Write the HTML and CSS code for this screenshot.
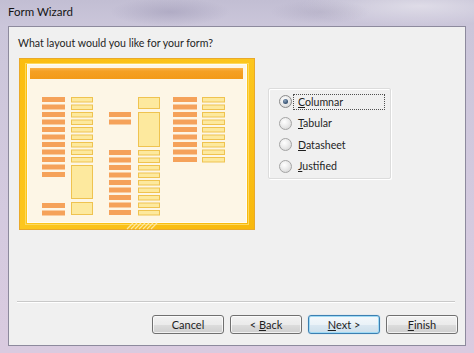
FILE: index.html
```html
<!DOCTYPE html>
<html lang="en">
<head>
  <meta charset="UTF-8" />
  <title>Form Wizard</title>
  <link rel="stylesheet" href="styles.css">
</head>
<body>

  <div class="window">
    <!-- Title bar -->
    <div class="titlebar">Form Wizard</div>

    <div class="client">
      <p class="prompt">What layout would you like for your form?</p>

      <div class="main">
        <!-- Layout preview -->
        <svg class="preview" width="236" height="172" viewBox="0 0 236 172">
          <defs>
            <linearGradient id="frame" x1="0" y1="0" x2="1" y2="1">
              <stop offset="0" stop-color="#fbbd10" />
              <stop offset="0.5" stop-color="#fcc61e" />
              <stop offset="1" stop-color="#f8b80c" />
            </linearGradient>
            <linearGradient id="head" x1="0" y1="0" x2="0" y2="1">
              <stop offset="0" stop-color="#f9b24a" />
              <stop offset="0.3" stop-color="#f5a023" />
              <stop offset="1" stop-color="#f39a18" />
            </linearGradient>
          </defs>
          <rect x="0.5" y="0.5" width="235" height="171" fill="url(#frame)" stroke="#e9a92a" />
          <rect x="6.5" y="5.5" width="223" height="161" fill="none" stroke="#fdd95e" />
          <rect x="8.5" y="6.5" width="219" height="158" fill="#fdf6e6" stroke="#fffdf5" />
          <rect x="11" y="10" width="213" height="11" fill="url(#head)" />

          <!-- hatch on bottom edge -->
          <g stroke="#fde6a0" stroke-width="1.2">
            <line x1="108" y1="171" x2="114" y2="165" />
            <line x1="112" y1="171" x2="118" y2="165" />
            <line x1="116" y1="171" x2="122" y2="165" />
            <line x1="120" y1="171" x2="126" y2="165" />
            <line x1="124" y1="171" x2="130" y2="165" />
            <line x1="128" y1="171" x2="134" y2="165" />
            <line x1="132" y1="171" x2="138" y2="165" />
          </g>

          <!-- labels -->
          <g fill="#f5a25a">
            <rect x="23" y="39" width="23" height="5" />
            <rect x="23" y="46.5" width="23" height="5" />
            <rect x="23" y="54" width="23" height="5" />
            <rect x="23" y="61.5" width="23" height="5" />
            <rect x="23" y="69" width="23" height="5" />
            <rect x="23" y="76.5" width="23" height="5" />
            <rect x="23" y="84" width="23" height="5" />
            <rect x="23" y="91.5" width="23" height="5" />
            <rect x="23" y="99" width="23" height="5" />
            <rect x="23" y="106.5" width="23" height="5" />
            <rect x="23" y="114" width="23" height="5" />
            <rect x="23" y="145" width="23" height="5" />
            <rect x="23" y="152.5" width="23" height="5" />

            <rect x="90" y="54" width="22" height="5" />
            <rect x="90" y="61.5" width="22" height="5" />
            <rect x="90" y="92" width="22" height="5" />
            <rect x="90" y="99.5" width="22" height="5" />
            <rect x="90" y="107" width="22" height="5" />
            <rect x="90" y="114.5" width="22" height="5" />
            <rect x="90" y="122" width="22" height="5" />
            <rect x="90" y="129.5" width="22" height="5" />
            <rect x="90" y="137" width="22" height="5" />
            <rect x="90" y="144.5" width="22" height="5" />
            <rect x="90" y="152" width="22" height="5" />

            <rect x="154" y="39" width="24" height="5" />
            <rect x="154" y="46.5" width="24" height="5" />
            <rect x="154" y="54" width="24" height="5" />
            <rect x="154" y="61.5" width="24" height="5" />
            <rect x="154" y="69" width="24" height="5" />
            <rect x="154" y="76.5" width="24" height="5" />
            <rect x="154" y="84" width="24" height="5" />
            <rect x="154" y="91.5" width="24" height="5" />
            <rect x="154" y="99" width="24" height="5" />
          </g>

          <!-- fields -->
          <g fill="#fde99e" stroke="#efc350" stroke-width="1">
            <rect x="52.5" y="39.5" width="21" height="4.5" />
            <rect x="52.5" y="47" width="21" height="4.5" />
            <rect x="52.5" y="54.5" width="21" height="4.5" />
            <rect x="52.5" y="62" width="21" height="4.5" />
            <rect x="52.5" y="69.5" width="21" height="4.5" />
            <rect x="52.5" y="77" width="21" height="4.5" />
            <rect x="52.5" y="84.5" width="21" height="4.5" />
            <rect x="52.5" y="92" width="21" height="4.5" />
            <rect x="52.5" y="99.5" width="21" height="4.5" />
            <rect x="52.5" y="107.5" width="21" height="33" />
            <rect x="52.5" y="144.5" width="21" height="12" />

            <rect x="119.5" y="39.5" width="21" height="11" />
            <rect x="119.5" y="54.5" width="21" height="34" />
            <rect x="119.5" y="92.5" width="21" height="4.5" />
            <rect x="119.5" y="100" width="21" height="4.5" />
            <rect x="119.5" y="107.5" width="21" height="4.5" />
            <rect x="119.5" y="115" width="21" height="4.5" />
            <rect x="119.5" y="122.5" width="21" height="4.5" />
            <rect x="119.5" y="130" width="21" height="4.5" />
            <rect x="119.5" y="137.5" width="21" height="4.5" />
            <rect x="119.5" y="145" width="21" height="4.5" />
            <rect x="119.5" y="152.5" width="21" height="4.5" />

            <rect x="183.5" y="39.5" width="22" height="4.5" />
            <rect x="183.5" y="47" width="22" height="4.5" />
            <rect x="183.5" y="54.5" width="22" height="4.5" />
            <rect x="183.5" y="62" width="22" height="4.5" />
            <rect x="183.5" y="69.5" width="22" height="4.5" />
            <rect x="183.5" y="77" width="22" height="4.5" />
            <rect x="183.5" y="84.5" width="22" height="4.5" />
            <rect x="183.5" y="92" width="22" height="4.5" />
            <rect x="183.5" y="99.5" width="22" height="4.5" />
          </g>
        </svg>

        <!-- Layout options -->
        <div class="layouts">
          <div class="opt">
            <span class="dot checked"></span>
            <span class="opt-text focus"><u>C</u>olumnar</span>
          </div>
          <div class="opt">
            <span class="dot"></span>
            <span class="opt-text"><u>T</u>abular</span>
          </div>
          <div class="opt">
            <span class="dot"></span>
            <span class="opt-text"><u>D</u>atasheet</span>
          </div>
          <div class="opt">
            <span class="dot"></span>
            <span class="opt-text"><u>J</u>ustified</span>
          </div>
        </div>
      </div>

      <!-- Separator and buttons -->
      <div class="footer">
        <div class="sep"></div>
        <div class="buttons">
          <button class="btn">Cancel</button>
          <button class="btn">&lt; <u>B</u>ack</button>
          <button class="btn default"><u>N</u>ext &gt;</button>
          <button class="btn"><u>F</u>inish</button>
        </div>
      </div>
    </div>
  </div>

</body>
</html>
```

FILE: styles.css
```css
body {
  margin: 0;
  background-color: #d6cce0;
  color: #1e1e1e;
  font-family: Lato, "Open Sans", sans-serif;
  font-size: 10.6px;
}
.window {
  width: 474px;
  height: 353px;
  display: flex;
  flex-direction: column;
  background:
    radial-gradient(ellipse 60px 14px at 170px 12px, rgba(150, 145, 175, 0.45), transparent),
    radial-gradient(ellipse 50px 12px at 320px 12px, rgba(160, 155, 180, 0.35), transparent),
    radial-gradient(ellipse 120px 20px at 420px 6px, rgba(255, 255, 255, 0.45), transparent),
    linear-gradient(to bottom, #c2bed3 0, #cbc6da 26px, #d4cadf 60%, #dacbe0 100%);
}
.titlebar {
  height: 26px;
  padding-left: 8px;
  line-height: 24px;
  font-size: 11.5px;
  color: #141414;
}
.client {
  margin: 0 8px;
  height: 320px;
  box-sizing: border-box;
  border: 1px solid #8d8a9d;
  background-color: #f0f0f0;
  display: flex;
  flex-direction: column;
}
.prompt {
  margin: 8px 0 0 9px;
  line-height: 16px;
}
.main {
  display: flex;
  align-items: flex-start;
  margin-top: 7px;
  padding-left: 10px;
}
.preview {
  display: block;
  width: 236px;
  height: 172px;
}
.layouts {
  margin: 30px 0 0 13px;
  width: 123px;
  height: 91px;
  box-sizing: border-box;
  border: 1px solid #dcdcdc;
  border-radius: 2px;
  box-shadow: inset 1px 1px 0 #fff, 1px 1px 0 #fff;
  padding-top: 2px;
}
.opt {
  display: flex;
  align-items: center;
  height: 21.5px;
  padding-left: 10px;
}
.dot {
  position: relative;
  width: 13px;
  height: 13px;
  box-sizing: border-box;
  border-radius: 50%;
  border: 1px solid #a4a4a4;
  background: radial-gradient(circle at 40% 35%, #ffffff 0, #ececec 45%, #cfcfcf 100%);
  margin-right: 1px;
  flex: none;
}
.dot.checked {
  border-color: #8a8a8a;
}
.dot.checked::after {
  content: "";
  position: absolute;
  left: 3px;
  top: 3px;
  width: 5px;
  height: 5px;
  border-radius: 50%;
  background: radial-gradient(circle at 40% 35%, #8fa6c0 0, #3d5877 60%, #2a3e58 100%);
}
.opt-text {
  padding: 0 4px;
  line-height: 14px;
  border: 1px solid transparent;
}
.opt-text.focus {
  width: 82px;
  border: 1px dotted #505050;
}
.footer {
  margin-top: auto;
  padding: 0 7px 11px 8px;
}
.sep {
  margin-right: 3px;
  border-top: 1px solid #c9c9c9;
  border-bottom: 1px solid #ffffff;
}
.buttons {
  display: flex;
  justify-content: flex-end;
  gap: 6px;
  margin-top: 12px;
}
.btn {
  width: 72px;
  height: 19px;
  padding: 0;
  box-sizing: border-box;
  border: 1px solid #707070;
  border-radius: 3px;
  background: linear-gradient(to bottom, #f2f2f2 0, #ebebeb 50%, #dddddd 51%, #cfcfcf 100%);
  box-shadow: inset 0 0 0 1px rgba(255, 255, 255, 0.7);
  font-family: Lato, "Open Sans", sans-serif;
  font-size: 11px;
  line-height: 16px;
  color: #1e1e1e;
}
.btn.default {
  border-color: #3c7fb1;
  background: linear-gradient(to bottom, #f4f8fb 0, #eaf2f8 50%, #dbe8f2 51%, #cddfeb 100%);
  box-shadow: inset 0 0 0 1px #9fdaf5, 0 0 1px #7fb8dc;
}
```
